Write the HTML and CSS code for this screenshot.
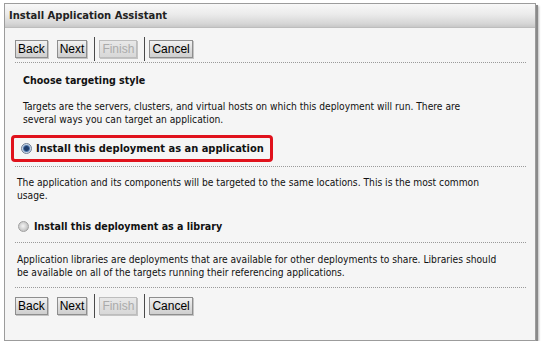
FILE: index.html
```html
<!DOCTYPE html>
<html lang="en">
<head>
    <meta charset="UTF-8">
    <title>Install Application Assistant</title>
    <link rel="stylesheet" href="styles.css">
</head>
<body>
    <div class="panel">
        <div class="title">Install Application Assistant</div>
        <div class="content">
            <div class="buttons">
                <button class="btn">Back</button>
                <button class="btn">Next</button>
                <span class="sep"></span>
                <button class="btn" disabled>Finish</button>
                <span class="sep"></span>
                <button class="btn">Cancel</button>
            </div>

            <div class="section">
                <h3>Choose targeting style</h3>
                <p class="intro">Targets are the servers, clusters, and virtual hosts on which this deployment will run. There are<br>several ways you can target an application.</p>
            </div>

            <div class="choice first">
                <label class="option highlight">
                    <span class="radio checked"></span>
                    Install this deployment as an application
                </label>
            </div>
            <p class="desc">The application and its components will be targeted to the same locations. This is the most common<br>usage.</p>

            <div class="choice second">
                <label class="option lib">
                    <span class="radio"></span>
                    Install this deployment as a library
                </label>
            </div>
            <p class="desc last">Application libraries are deployments that are available for other deployments to share. Libraries should<br>be available on all of the targets running their referencing applications.</p>

            <div class="buttons bottom">
                <button class="btn">Back</button>
                <button class="btn">Next</button>
                <span class="sep"></span>
                <button class="btn" disabled>Finish</button>
                <span class="sep"></span>
                <button class="btn">Cancel</button>
            </div>
        </div>
    </div>
</body>
</html>
```

FILE: styles.css
```css
body {
    margin: 0;
    padding: 3px 0 0 4px;
    background: #ffffff;
    font-family: "DejaVu Sans Condensed", "DejaVu Sans", sans-serif;
    font-size: 10.2px;
    color: #111;
}
.panel {
    width: 532px;
    height: 338px;
    background: #f5f5f5;
    border: 1px solid #9c9c9c;
    box-shadow: 2px 2px 0 #8a8a8a, 3px 3px 2px #bdbdbd;
    box-sizing: border-box;
}
.title {
    height: 23px;
    line-height: 24px;
    padding-left: 4px;
    font-weight: bold;
    font-size: 11.1px;
    color: #222;
    background: linear-gradient(#f8f8f8, #ebebeb 45%, #d6d6d6 85%, #c8c8c8);
    border-bottom: 1px solid #bdbdbd;
}
.content {
    padding: 0 9px 0 10px;
}
.buttons {
    display: flex;
    align-items: center;
    height: 20px;
    margin-top: 11px;
    padding-bottom: 3px;
    border-bottom: 1px dotted #9a9a9a;
}
.buttons.bottom {
    margin-top: 8px;
    padding-top: 8px;
    padding-bottom: 0;
    border-top: 1px dotted #9a9a9a;
    border-bottom: none;
}
.btn {
    font-family: "Liberation Sans", Arial, sans-serif;
    font-size: 12px;
    height: 18px;
    padding: 0 2px;
    margin: 0;
    color: #000;
    background: linear-gradient(#f2f2f2, #dedede 50%, #cfcfcf);
    border: 1px solid #8e8e8e;
    border-radius: 0;
    box-shadow: 1px 1px 0 #c4c4c4;
}
.btn + .btn {
    margin-left: 9px;
}
.btn:disabled {
    color: #ababab;
    background: linear-gradient(#e8e8e8, #d8d8d8);
    border-color: #bdbdbd;
}
.sep {
    width: 1px;
    height: 24px;
    background: #4a4a4a;
    margin: 0 4px 0 7px;
}
.section {
    padding: 0 8px;
}
h3 {
    font-size: 10.6px;
    line-height: 13px;
    margin: 11px 0 13px;
}
.intro {
    margin: 0;
    line-height: 13px;
}
.choice {
    border-bottom: 1px dotted #9a9a9a;
}
.choice.first {
    margin-top: 9px;
    padding-bottom: 4px;
}
.choice.second {
    margin-top: 13px;
    padding-bottom: 5px;
}
.option {
    display: inline-flex;
    align-items: center;
    font-weight: bold;
    font-size: 10.6px;
    box-sizing: border-box;
}
.highlight {
    height: 27px;
    width: 262px;
    margin-left: -4px;
    padding-left: 7px;
    gap: 4px;
    font-size: 11px;
    border: 3px solid #e0121c;
    border-radius: 4px;
}
.lib {
    height: 22px;
    padding-left: 3px;
    gap: 5px;
}
.radio {
    flex: none;
    width: 11px;
    height: 11px;
    border-radius: 50%;
    box-sizing: border-box;
    border: 1px solid #a0a0a0;
    background: radial-gradient(circle at 45% 45%, #f4f4f4, #c4c4c4 70%, #a8a8a8);
}
.radio.checked {
    border-color: #6f7f96;
    background: radial-gradient(circle, #1f3c6a 0 2px, #4f78ae 3px, #c9d6e6 4px);
}
.desc {
    margin: 9px 0 0 2px;
    line-height: 13px;
}
.desc.last {
    margin-top: 10px;
}
```
